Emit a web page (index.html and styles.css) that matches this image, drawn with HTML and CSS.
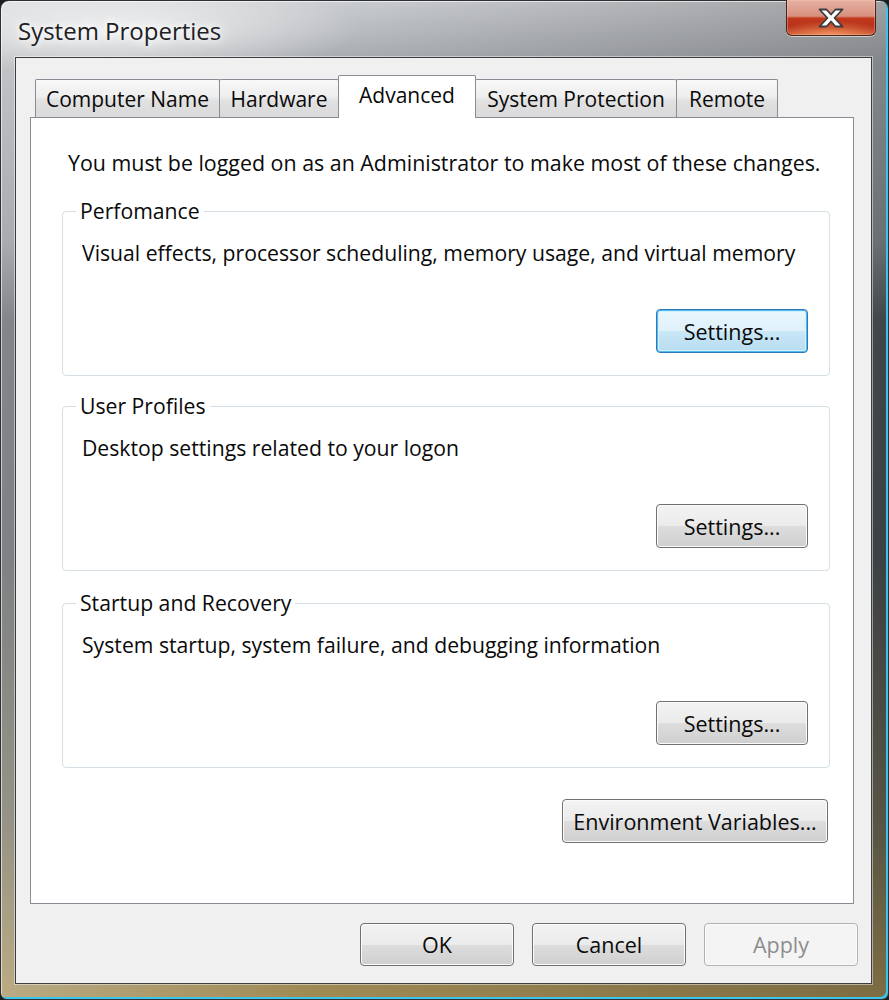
FILE: index.html
```html
<!DOCTYPE html>
<html lang="en">
<head>
    <meta charset="UTF-8">
    <meta name="viewport" content="width=device-width, initial-scale=1.0">
    <title>System Properties</title>
    <link rel="stylesheet" href="styles.css">
</head>
<body>
    <div class="window">
        <div class="titlebar">
            <span class="title">System Properties</span>
            <button class="close-btn" aria-label="Close">
                <svg width="26" height="20" viewBox="0 0 26 20">
                    <polygon points="1.5,1.5 8.5,1.5 13,6.5 17.5,1.5 24.5,1.5 16.5,10 24.5,18.5 17.5,18.5 13,13.5 8.5,18.5 1.5,18.5 9.5,10"
                             fill="#fff" stroke="#3a3d42" stroke-width="1.8" stroke-linejoin="round"/>
                </svg>
            </button>
        </div>

        <div class="client">
            <div class="tabs">
                <div class="tab tab-computer">Computer Name</div>
                <div class="tab tab-hardware">Hardware</div>
                <div class="tab tab-advanced active">Advanced</div>
                <div class="tab tab-protection">System Protection</div>
                <div class="tab tab-remote">Remote</div>
            </div>

            <div class="panel">
                <p class="notice">You must be logged on as an Administrator to make most of these changes.</p>

                <fieldset class="group">
                    <legend>Perfomance</legend>
                    <p class="group-desc">Visual effects, processor scheduling, memory usage, and virtual memory</p>
                    <div class="group-actions">
                        <button class="btn btn-settings btn-default">Settings...</button>
                    </div>
                </fieldset>

                <fieldset class="group">
                    <legend>User Profiles</legend>
                    <p class="group-desc">Desktop settings related to your logon</p>
                    <div class="group-actions">
                        <button class="btn btn-settings">Settings...</button>
                    </div>
                </fieldset>

                <fieldset class="group group-last">
                    <legend>Startup and Recovery</legend>
                    <p class="group-desc">System startup, system failure, and debugging information</p>
                    <div class="group-actions">
                        <button class="btn btn-settings">Settings...</button>
                    </div>
                </fieldset>

                <div class="env-row">
                    <button class="btn btn-env">Environment Variables...</button>
                </div>
            </div>

            <div class="dialog-buttons">
                <button class="btn btn-dialog">OK</button>
                <button class="btn btn-dialog">Cancel</button>
                <button class="btn btn-dialog" disabled>Apply</button>
            </div>
        </div>
    </div>
</body>
</html>
```

FILE: styles.css
```css
body {
    margin: 0;
    background-color: #1b1d20;
    font-family: "Open Sans", "Noto Sans", sans-serif;
    color: #0a0a0a;
}

/* window frame (glass) */
.window {
    width: 889px;
    height: 1000px;
    box-sizing: border-box;
    padding: 0 16px 15px 14px;
    display: flex;
    flex-direction: column;
    border: 1px solid #2e3134;
    border-radius: 9px 9px 7px 7px;
    box-shadow: inset -2px -2px 0 #3cc4ec, inset 1px 1px 0 rgba(255,255,255,0.6);
    background:
        radial-gradient(ellipse 240px 48px at 120px 28px, rgba(255,255,255,0.7), rgba(255,255,255,0) 100%),
        linear-gradient(to right, rgba(255,255,255,0.28), rgba(255,255,255,0) 35%, rgba(0,0,0,0.22) 100%),
        linear-gradient(to bottom, #cdd0d3 0, #a9adb1 60px, #8a8e92 240px, #55595d 320px, #4f5356 560px, #6e6b58 820px, #a28c54 1000px);
}

.titlebar {
    height: 56px;
    display: flex;
    justify-content: space-between;
    align-items: flex-start;
}

.title {
    margin: 13px 0 0 3px;
    font-size: 24px;
    color: #1d2024;
    text-shadow: 0 0 6px #fff, 0 0 12px #fff, 0 0 18px rgba(255,255,255,0.8);
}

.close-btn {
    width: 90px;
    height: 36px;
    margin: -1px -4px 0 0;
    padding: 0;
    display: flex;
    align-items: center;
    justify-content: center;
    border: 1px solid #4a2520;
    border-top: none;
    border-radius: 0 0 6px 6px;
    box-shadow: 0 1px 0 rgba(220,220,220,0.8), inset 0 0 0 1px rgba(255,200,180,0.35);
    background:
        radial-gradient(ellipse 60px 14px at 50% 100%, rgba(255,170,110,0.75), rgba(255,170,110,0)),
        linear-gradient(to bottom, #e6b2a4 0%, #d8907e 46%, #c2391c 52%, #b5301a 80%, #c9502c 100%);
}

/* client area */
.client {
    flex: 1;
    display: flex;
    flex-direction: column;
    padding: 17px 17px 17px 14px;
    background-color: #f0f0f0;
    border: 1px solid #3a3e43;
    box-shadow: 0 0 0 1px rgba(255,255,255,0.45);
}

.tabs {
    display: flex;
    align-items: flex-end;
    height: 42px;
    margin-left: 5px;
    position: relative;
    z-index: 1;
}

.tab {
    box-sizing: border-box;
    height: 38px;
    display: flex;
    align-items: center;
    justify-content: center;
    font-size: 21px;
    border: 1px solid #898c95;
    border-bottom: none;
    border-radius: 2px 2px 0 0;
    background: linear-gradient(to bottom, #f8f8f8 0%, #eeeeee 45%, #e2e2e2 55%, #d9d9d9 100%);
}

.tab + .tab {
    margin-left: -1px;
}

.tab.active {
    height: 43px;
    margin-bottom: -1px;
    padding-bottom: 5px;
    background: #fff;
    position: relative;
    z-index: 2;
}

.tab-computer { width: 185px; }
.tab-hardware { width: 120px; }
.tab-advanced { width: 138px; }
.tab-protection { width: 202px; }
.tab-remote { width: 102px; }

.panel {
    flex: 1;
    padding: 31px 23px 0 31px;
    background-color: #fff;
    border: 1px solid #898c95;
}

.notice {
    margin: 0 0 20px 6px;
    font-size: 21.4px;
    line-height: 28px;
}

.group {
    margin: 0 0 16px 0;
    padding: 14px 21px 22px 19px;
    border: 1px solid #d5dfe5;
    border-radius: 4px;
}

.group-last {
    margin-top: 18px;
}

.group legend {
    margin-left: -6px;
    padding: 0 4px;
    font-size: 21.2px;
    line-height: 28px;
}

.group-desc {
    margin: 0;
    font-size: 21.2px;
    line-height: 28px;
}

.group-actions {
    display: flex;
    justify-content: flex-end;
    margin-top: 42px;
}

/* vista buttons */
.btn {
    box-sizing: border-box;
    height: 44px;
    padding: 0;
    font-family: "Open Sans", "Noto Sans", sans-serif;
    font-size: 21.5px;
    color: #0a0a0a;
    border: 1px solid #707070;
    border-radius: 4px;
    box-shadow: inset 0 0 0 1px #fbfbfb;
    background: linear-gradient(to bottom, #f3f3f3 0%, #ebebeb 50%, #dddddd 51%, #cfcfcf 100%);
}

.btn-settings {
    width: 152px;
}

.btn-default {
    border-color: #2f79b8;
    box-shadow: inset 0 0 0 1px #4fbbee, inset 0 0 0 2px #d4f0fc;
    background: linear-gradient(to bottom, #eaf6fd 0%, #dff1fb 50%, #c9e7f7 51%, #b7dcf1 100%);
}

.env-row {
    display: flex;
    justify-content: flex-end;
    padding-right: 2px;
    margin-top: 31px;
}

.btn-env {
    width: 266px;
}

.dialog-buttons {
    display: flex;
    justify-content: flex-end;
    gap: 18px;
    margin: 19px -4px 0 0;
}

.btn-dialog {
    width: 154px;
    height: 43px;
}

.btn-dialog:disabled {
    color: #8d8d8d;
    border-color: #adb2b5;
    background: #f4f4f4;
}
```
